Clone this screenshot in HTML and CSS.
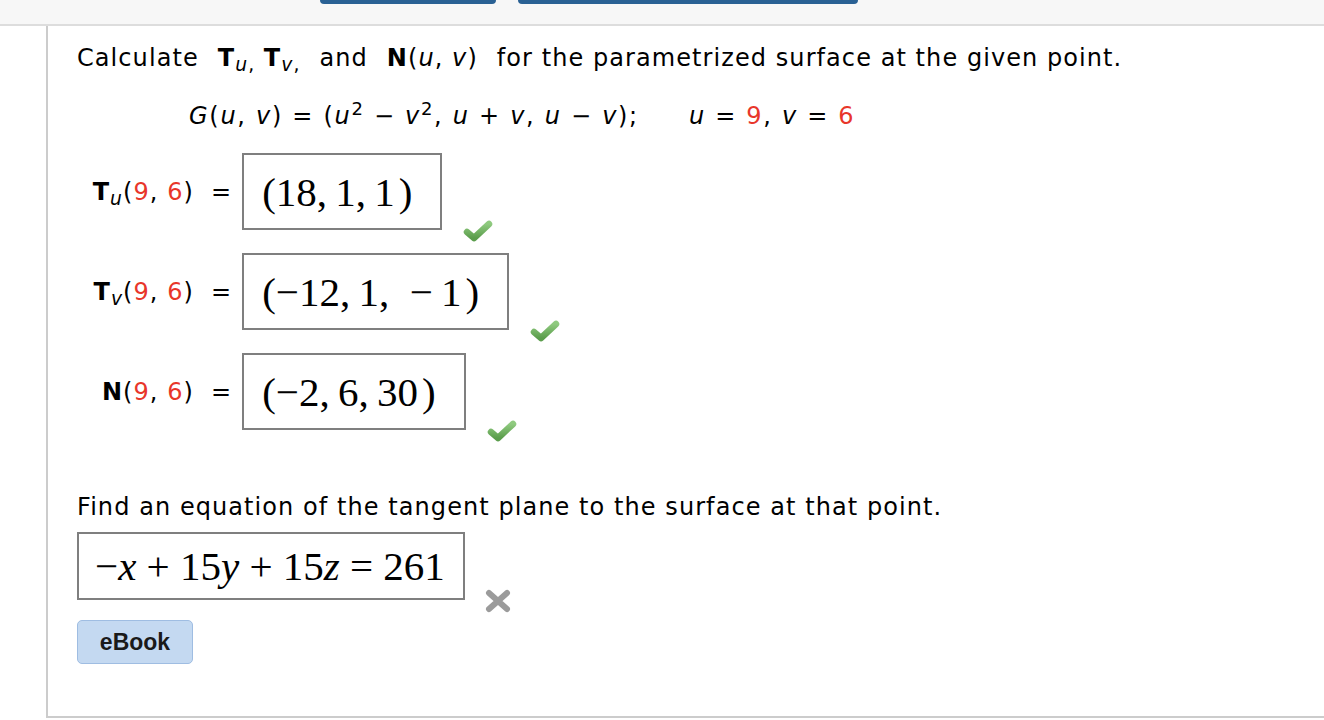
FILE: index.html
```html
<!DOCTYPE html>
<html>
<head>
<meta charset="utf-8">
<link rel="stylesheet" href="styles.css">
</head>
<body>
<div class="topbar">
  <div class="tab tab-a"></div>
  <div class="tab tab-b"></div>
</div>
<div class="panel">
  <p class="lead">Calculate<span class="gap"></span><b>T</b><sub><i>u</i>,</sub> <b>T</b><sub><i>v</i>,</sub><span class="gap"></span>and<span class="gap"></span><b>N</b>(<i>u</i>, <i>v</i>)<span class="gap"></span>for the parametrized surface at the given point.</p>
  <p class="given"><i>G</i>(<i>u</i>, <i>v</i>) = (<i>u</i><sup>2</sup> − <i>v</i><sup>2</sup>, <i>u</i> + <i>v</i>, <i>u</i> − <i>v</i>);<span class="at"><i>u</i> = <span class="red">9</span>, <i>v</i> = <span class="red">6</span></span></p>

  <div class="rows">
    <div class="row">
      <div class="label"><b>T</b><sub><i>u</i></sub>(<span class="red">9</span>, <span class="red">6</span>)</div>
      <div class="equals">=</div>
      <div class="box"><span class="math">(18,&thinsp;1,&thinsp;1<span class="rp">)</span></span></div>
      <svg class="check" width="30" height="23" viewBox="0 0 30 23"><defs><linearGradient id="g1" x1="0" y1="0" x2="0" y2="1"><stop offset="0" stop-color="#8fca7f"/><stop offset="1" stop-color="#5b9d4c"/></linearGradient></defs><path d="M4 13 L11 19 L26 5" fill="none" stroke="url(#g1)" stroke-width="6.5" stroke-linecap="round" stroke-linejoin="round"/></svg>
    </div>
    <div class="row">
      <div class="label"><b>T</b><sub><i>v</i></sub>(<span class="red">9</span>, <span class="red">6</span>)</div>
      <div class="equals">=</div>
      <div class="box"><span class="math">(−12,&thinsp;1,&ensp;−&thinsp;1<span class="rp">)</span></span></div>
      <svg class="check" width="30" height="23" viewBox="0 0 30 23"><defs><linearGradient id="g2" x1="0" y1="0" x2="0" y2="1"><stop offset="0" stop-color="#8fca7f"/><stop offset="1" stop-color="#5b9d4c"/></linearGradient></defs><path d="M4 13 L11 19 L26 5" fill="none" stroke="url(#g2)" stroke-width="6.5" stroke-linecap="round" stroke-linejoin="round"/></svg>
    </div>
    <div class="row">
      <div class="label"><b>N</b>(<span class="red">9</span>, <span class="red">6</span>)</div>
      <div class="equals">=</div>
      <div class="box"><span class="math">(−2,&thinsp;6,&thinsp;30<span class="rp">)</span></span></div>
      <svg class="check" width="30" height="23" viewBox="0 0 30 23"><defs><linearGradient id="g3" x1="0" y1="0" x2="0" y2="1"><stop offset="0" stop-color="#8fca7f"/><stop offset="1" stop-color="#5b9d4c"/></linearGradient></defs><path d="M4 13 L11 19 L26 5" fill="none" stroke="url(#g3)" stroke-width="6.5" stroke-linecap="round" stroke-linejoin="round"/></svg>
    </div>
  </div>

  <p class="find">Find an equation of the tangent plane to the surface at that point.</p>
  <div class="row answer">
    <div class="box box-eq"><span class="math">−<i>x</i> + 15<i>y</i> + 15<i>z</i> = 261</span></div>
    <svg class="cross" width="28" height="26" viewBox="0 0 28 26"><path d="M5 5 L23 21 M23 5 L5 21" fill="none" stroke="#9b9b9b" stroke-width="6" stroke-linecap="round"/></svg>
  </div>
  <button class="ebook">eBook</button>
</div>
</body>
</html>
```

FILE: styles.css
```css
html, body {
  margin: 0;
  padding: 0;
  background: #ffffff;
}
body {
  font-family: "DejaVu Sans", Verdana, sans-serif;
  font-size: 24px;
  letter-spacing: 1.07px;
  color: #000;
  width: 1324px;
  height: 720px;
  overflow: hidden;
}
.topbar {
  height: 24px;
  background: #f7f7f7;
  border-bottom: 2px solid #dddddd;
  display: flex;
  align-items: flex-start;
  padding-left: 320px;
  gap: 22px;
}
.tab {
  height: 4px;
  background: #2a6194;
  border-radius: 0 0 6px 6px;
}
.tab-a { width: 176px; }
.tab-b { width: 340px; }

.panel {
  margin-left: 46px;
  border-left: 2px solid #cccccc;
  border-bottom: 2px solid #cccccc;
  padding: 17px 0 0 29px;
  box-sizing: border-box;
  height: 692px;
}
p { margin: 0; }
.lead {
  line-height: 30px;
  white-space: nowrap;
}
.gap {
  display: inline-block;
  width: 19px;
}
sub {
  font-size: 0.78em;
  line-height: 0;
  vertical-align: -0.28em;
}
sup {
  font-size: 0.75em;
  line-height: 0;
  vertical-align: 0.5em;
}
.given {
  line-height: 30px;
  margin-top: 28px;
  padding-left: 112px;
  white-space: nowrap;
  letter-spacing: 1.7px;
}
.at { margin-left: 50px; }
.red { color: #e8362a; }

.rows {
  margin-top: 22px;
  display: flex;
  flex-direction: column;
  gap: 23px;
}
.row {
  display: flex;
  align-items: center;
}
.label {
  width: 117px;
  text-align: right;
  white-space: nowrap;
  line-height: 30px;
}
.equals {
  margin: 0 10px 0 17px;
}
.box {
  height: 77px;
  box-sizing: border-box;
  border: 2px solid #7f7f7f;
  display: flex;
  align-items: center;
  padding: 0 28px 0 18px;
  background: #fff;
}
.math {
  font-family: "Liberation Serif", "Times New Roman", serif;
  font-size: 41px;
  letter-spacing: 0;
  white-space: nowrap;
}
.rp { margin-left: 4px; }
.check {
  align-self: flex-end;
  margin-left: 21px;
  margin-bottom: -12px;
}
.find {
  margin-top: 62px;
  line-height: 30px;
}
.answer {
  margin-top: 10px;
}
.box-eq {
  height: 68px;
  padding: 0 18px 0 16px;
}
.cross {
  align-self: flex-end;
  margin-left: 19px;
  margin-bottom: -14px;
}
.ebook {
  display: block;
  margin-top: 20px;
  width: 116px;
  height: 44px;
  background: #c4d9f1;
  border: 1px solid #9fbde2;
  border-radius: 5px;
  font-family: "Liberation Sans", Arial, sans-serif;
  font-weight: bold;
  font-size: 23px;
  letter-spacing: 0;
  color: #1a1a1a;
  padding: 0;
}
```
